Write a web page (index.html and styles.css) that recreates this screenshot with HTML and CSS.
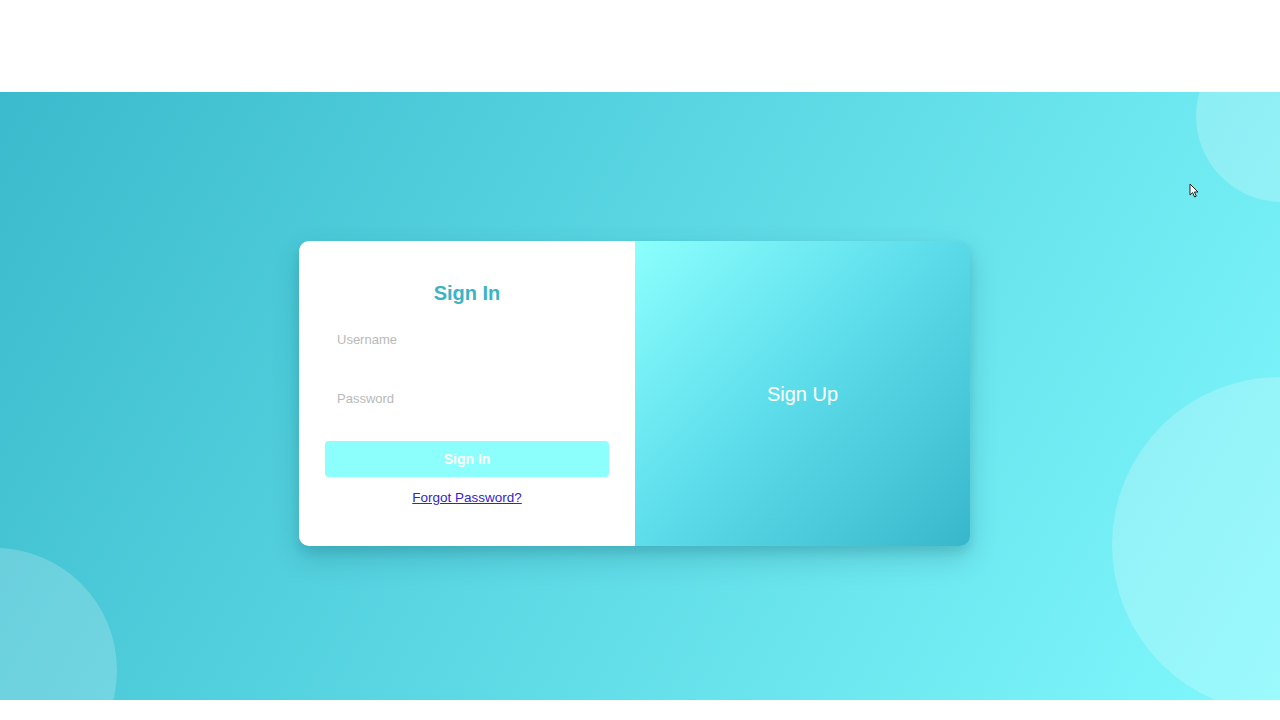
FILE: index.html
```html
<!DOCTYPE html>
<html lang="en">
<head>
<meta charset="utf-8">
<title>Sign In</title>
<link rel="stylesheet" href="styles.css">
</head>
<body>
<div class="top-space"></div>
<main class="stage">
  <span class="bubble bubble-tr"></span>
  <span class="bubble bubble-bl"></span>
  <span class="bubble bubble-br"></span>
  <svg class="cursor" width="11" height="15" viewBox="0 0 11 15"><path d="M1 1 L1 12 L3.6 9.6 L5.6 14 L7.3 13.2 L5.4 9 L9 9 Z" fill="#fff" stroke="#222" stroke-width="1"/></svg>
  <section class="card">
    <form class="panel-signin">
      <h1 class="title">Sign In</h1>
      <input class="field" type="text" placeholder="Username">
      <input class="field field-pass" type="password" placeholder="Password">
      <button class="btn" type="button">Sign In</button>
      <a class="forgot" href="#">Forgot Password?</a>
    </form>
    <div class="panel-signup">
      <span class="signup-text">Sign Up</span>
    </div>
  </section>
</main>
<div class="bottom-space"></div>
</body>
</html>
```
FILE: styles.css
```css
* { box-sizing: border-box; }
html, body { margin: 0; padding: 0; background: #fff; }
body { font-family: "Liberation Sans", Arial, sans-serif; width: 1280px; height: 720px; overflow: hidden; }

.top-space { height: 92px; background: #fff; }
.bottom-space { height: 20px; background: #fff; }

.stage {
  position: relative;
  height: 608px;
  overflow: hidden;
  background: linear-gradient(120deg, #3abacc 0%, #80f9fd 100%);
  display: flex;
  align-items: center;
  justify-content: center;
  padding-right: 11px;
  padding-bottom: 5px;
}

.bubble { position: absolute; border-radius: 50%; background: rgba(255,255,255,0.2); }
.bubble-tr { width: 172px; height: 172px; left: 1196px; top: -62px; background: rgba(255,255,255,0.22); }
.bubble-bl { width: 244px; height: 244px; left: -127px; top: 456px; }
.bubble-br { width: 336px; height: 336px; left: 1112px; top: 285px; background: rgba(255,255,255,0.22); }
.cursor { position: absolute; left: 1189px; top: 91px; }

.card {
  position: relative;
  width: 671px;
  height: 305px;
  display: flex;
  border-radius: 10px;
  overflow: hidden;
  box-shadow: 0 12px 28px rgba(0,70,90,0.2), 0 6px 10px rgba(0,70,90,0.12);
}

.panel-signin {
  width: 336px;
  background: #fff;
  display: flex;
  flex-direction: column;
  align-items: center;
  padding: 40px 26px 0;
}

.title {
  margin: 0;
  font-size: 20px;
  line-height: 24px;
  font-weight: 700;
  color: #3ab4c5;
}

.field {
  width: 100%;
  height: 36px;
  margin-top: 16px;
  border: none;
  outline: none;
  background: transparent;
  padding: 0 12px;
  font-family: "Liberation Sans", Arial, sans-serif;
  font-size: 13px;
  color: #333;
}
.field::placeholder { color: #b9b9b9; }
.field-pass { margin-top: 23px; }

.btn {
  width: 100%;
  height: 36px;
  margin-top: 25px;
  border: none;
  border-radius: 4px;
  background: #8cfffc;
  color: #fff;
  font-family: "Liberation Sans", Arial, sans-serif;
  font-size: 14px;
  font-weight: 700;
}

.forgot {
  margin-top: 13px;
  font-size: 13.5px;
  line-height: 16px;
  color: #3226c6;
  text-decoration: underline;
}

.panel-signup {
  flex: 1;
  background: linear-gradient(135deg, #8cfffd 0%, #5fdfec 45%, #37b7ca 100%);
  display: flex;
  align-items: center;
  justify-content: center;
}

.signup-text {
  color: #fff;
  font-size: 20px;
  line-height: 24px;
}
```
